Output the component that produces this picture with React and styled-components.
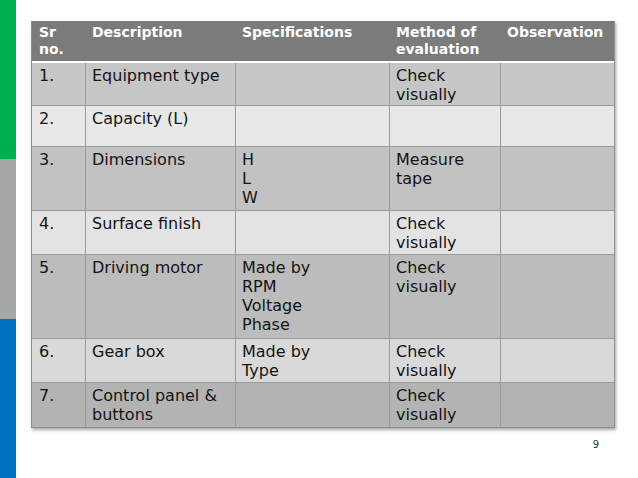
import React from 'react';
import styled, { createGlobalStyle } from 'styled-components';

const GlobalStyle = createGlobalStyle`
  html, body {
    margin: 0;
    padding: 0;
    background: #ffffff;
  }
  * {
    box-sizing: border-box;
  }
`;

const COLUMNS = '53px 150px 154px 111px 116px';

const Slide = styled.div`
  display: flex;
  width: 638px;
  height: 478px;
  background: #ffffff;
  overflow: hidden;
  font-family: 'DejaVu Sans', Verdana, sans-serif;
`;

const Stripe = styled.div`
  display: flex;
  flex-direction: column;
  width: 16px;
  flex: none;
`;

const StripeBlock = styled.div`
  height: ${(p) => p.h}px;
  background: ${(p) => p.color};
`;

const Content = styled.div`
  display: flex;
  flex-direction: column;
  padding: 21px 0 0 15px;
`;

const Table = styled.div`
  width: 584px;
  border: 1px solid #8f8f8f;
  box-shadow: 1px 2px 3px rgba(0, 0, 0, 0.35);
  background: #ffffff;
`;

const HeaderRow = styled.div`
  display: grid;
  grid-template-columns: ${COLUMNS};
  height: 42px;
  background: #7b7b7b;
  border-bottom: 2px solid #ffffff;
  margin-top: -1px;
`;

const HeaderCell = styled.div`
  padding: 3px 0 0 7px;
  color: #ffffff;
  font-weight: bold;
  font-size: 14px;
  line-height: 17px;
`;

const Row = styled.div`
  display: grid;
  grid-template-columns: ${COLUMNS};
  height: ${(p) => p.h}px;
  background: ${(p) => p.shade};
  border-bottom: 1px solid #9a9a9a;

  &:last-child {
    border-bottom: none;
  }
`;

const Cell = styled.div`
  padding: 3px 0 0 7px;
  color: #141414;
  font-size: 16px;
  line-height: 19px;
  white-space: pre-line;

  & + & {
    border-left: 1px solid #9a9a9a;
    padding-left: 6px;
  }
`;

const PageNumber = styled.div`
  width: 584px;
  margin-top: 11px;
  padding-right: 16px;
  text-align: right;
  font-size: 10px;
  line-height: 12px;
  color: #333333;
`;

const headers = ['Sr\nno.', 'Description', 'Specifications', 'Method of\nevaluation', 'Observation'];

const rows = [
  { h: 43, shade: '#c6c6c6', cells: ['1.', 'Equipment type', '', 'Check\nvisually', ''] },
  { h: 41, shade: '#e8e8e8', cells: ['2.', 'Capacity (L)', '', '', ''] },
  { h: 64, shade: '#c2c2c2', cells: ['3.', 'Dimensions', 'H\nL\nW', 'Measure\ntape', ''] },
  { h: 44, shade: '#e3e3e3', cells: ['4.', 'Surface finish', '', 'Check\nvisually', ''] },
  { h: 84, shade: '#bcbcbc', cells: ['5.', 'Driving motor', 'Made by\nRPM\nVoltage\nPhase', 'Check\nvisually', ''] },
  { h: 44, shade: '#d9d9d9', cells: ['6.', 'Gear box', 'Made by\nType', 'Check\nvisually', ''] },
  { h: 44, shade: '#b3b3b3', cells: ['7.', 'Control panel &\nbuttons', '', 'Check\nvisually', ''] },
];

export default function App() {
  return (
    <>
      <GlobalStyle />
      <Slide>
        <Stripe>
          <StripeBlock h={159} color="#00b050" />
          <StripeBlock h={160} color="#a6a6a6" />
          <StripeBlock h={159} color="#0070c0" />
        </Stripe>
        <Content>
          <Table>
            <HeaderRow>
              {headers.map((text, i) => (
                <HeaderCell key={i}>
                  {text.split('\n').map((line, j) => (
                    <div key={j}>{line}</div>
                  ))}
                </HeaderCell>
              ))}
            </HeaderRow>
            {rows.map((row, i) => (
              <Row key={i} h={row.h} shade={row.shade}>
                {row.cells.map((text, j) => (
                  <Cell key={j}>{text}</Cell>
                ))}
              </Row>
            ))}
          </Table>
          <PageNumber>9</PageNumber>
        </Content>
      </Slide>
    </>
  );
}
